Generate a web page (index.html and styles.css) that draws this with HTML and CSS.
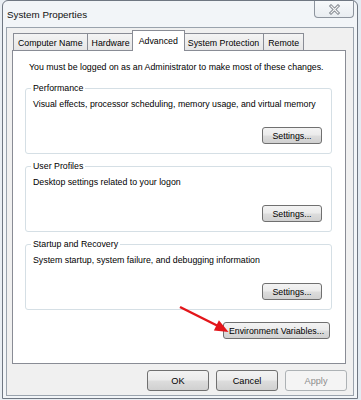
FILE: index.html
```html
<!DOCTYPE html>
<html>
<head>
<meta charset="utf-8">
<link rel="stylesheet" href="styles.css">
</head>
<body>
<div class="window">
  <div class="titlebar">
    <span class="title">System Properties</span>
    <div class="close">
      <svg width="40" height="17" viewBox="0 0 40 17">
        <path d="M16 6 L23 13 M23 6 L16 13" stroke="#7b8089" stroke-width="3" stroke-linecap="square"/>
        <path d="M16 6 L23 13 M23 6 L16 13" stroke="#f6f6f6" stroke-width="1.2" stroke-linecap="square"/>
      </svg>
    </div>
  </div>
  <div class="client">
    <div class="tabs">
      <div class="tab">Computer Name</div>
      <div class="tab">Hardware</div>
      <div class="tab selected">Advanced</div>
      <div class="tab">System Protection</div>
      <div class="tab">Remote</div>
    </div>
    <div class="panel">
      <div class="note">You must be logged on as an Administrator to make most of these changes.</div>
      <fieldset class="group">
        <legend>Performance</legend>
        <div class="desc">Visual effects, processor scheduling, memory usage, and virtual memory</div>
        <div class="row"><button class="btn small">Settings...</button></div>
      </fieldset>
      <fieldset class="group">
        <legend>User Profiles</legend>
        <div class="desc">Desktop settings related to your logon</div>
        <div class="row"><button class="btn small">Settings...</button></div>
      </fieldset>
      <fieldset class="group">
        <legend>Startup and Recovery</legend>
        <div class="desc">System startup, system failure, and debugging information</div>
        <div class="row"><button class="btn small">Settings...</button></div>
      </fieldset>
      <div class="row env-row"><button class="btn env">Environment Variables...</button></div>
    </div>
    <div class="actions">
      <button class="btn big">OK</button>
      <button class="btn big">Cancel</button>
      <button class="btn big disabled">Apply</button>
    </div>
  </div>
</div>
<svg class="arrow" width="361" height="400" viewBox="0 0 361 400">
  <line x1="180" y1="307" x2="218" y2="326" stroke="#e3151a" stroke-width="2.5"/>
  <polygon points="228.5,332 213.9,330.6 218.9,320.3" fill="#e3151a"/>
</svg>
</body>
</html>
```
FILE: styles.css
```css
* { box-sizing: border-box; }
html, body { margin: 0; padding: 0; }
body {
  width: 361px;
  height: 400px;
  overflow: hidden;
  background: linear-gradient(90deg, #e9eef3 0%, #e4ebf2 100%);
  font-family: "Liberation Sans", Arial, sans-serif;
  font-size: 8.8px;
  color: #000;
  position: relative;
}
.window {
  margin-left: 2px;
  width: 356px;
  height: 399px;
  border: 1px solid #6f7782;
  border-radius: 6px 6px 0 0;
  background: #f2f5f8;
  padding: 0 3px 2px 3px;
  display: flex;
  flex-direction: column;
}
.titlebar {
  height: 26px;
  display: flex;
  justify-content: space-between;
  align-items: flex-start;
}
.title {
  font-size: 9.8px;
  line-height: 12px;
  margin-top: 8px;
  margin-left: 1px;
  color: #111;
}
.close {
  width: 40px;
  height: 17px;
  border: 1px solid #8d949e;
  border-top: none;
  border-radius: 0 0 4px 4px;
  background: linear-gradient(#f7f9fb, #e9edf1);
}
.close svg { display: block; margin-top: -1px; }
.client {
  height: 369px;
  border: 1px solid #9aa3ad;
  background: #f0f0f0;
  padding: 2px 7px 4px 5px;
  display: flex;
  flex-direction: column;
}
.tabs {
  height: 20px;
  display: flex;
  align-items: flex-end;
  padding-left: 1px;
}
.tab {
  height: 17px;
  line-height: 12px;
  padding: 3px 4px 1px 4px;
  border: 1px solid #898c95;
  border-bottom: none;
  margin-right: -1px;
  background: linear-gradient(#f4f4f4, #e6e6e6);
  white-space: nowrap;
}
.tab.selected {
  height: 21px;
  padding: 4px 6px 4px 6px;
  margin: 0 -1px -1px -2px;
  background: #fff;
  position: relative;
  z-index: 1;
}
.tab.selected + .tab { margin-left: -1px; }
.panel {
  height: 314px;
  border: 1px solid #898c95;
  background: #fff;
  padding: 10px 13px 0 12px;
  display: flex;
  flex-direction: column;
}
.note {
  line-height: 12px;
  margin-left: 4px;
  white-space: nowrap;
}
.group {
  margin: 6px 0 0 0;
  border: 1px solid #d5dfe5;
  border-radius: 3px;
  padding: 4px 9px 9px 7px;
  min-width: 0;
}
.note + .group { margin-top: 9px; }
.group legend {
  line-height: 12px;
  padding: 0 2px;
  margin-left: -2px;
}
.desc {
  line-height: 12px;
  white-space: nowrap;
}
.row {
  display: flex;
  justify-content: flex-end;
  margin-top: 17px;
}
.btn {
  font-family: "Liberation Sans", Arial, sans-serif;
  font-size: 8.8px;
  color: #000;
  border: 1px solid #707070;
  border-radius: 3px;
  background: linear-gradient(#f3f3f3 0%, #ebebeb 48%, #dddddd 52%, #d0d0d0 100%);
  padding: 0;
  margin: 0;
  line-height: 12px;
}
.btn.small { width: 60px; height: 17px; }
.env-row { margin-top: 12px; margin-right: 2px; }
.btn.env { width: 107px; height: 17px; }
.actions {
  margin-top: 6px;
  margin-right: -1px;
  display: flex;
  justify-content: flex-end;
  gap: 7px;
}
.btn.big { width: 62px; height: 21px; font-size: 9.2px; }
.btn.disabled {
  border-color: #adb2b5;
  background: #f4f4f4;
  color: #8d8d8d;
}
.arrow {
  position: absolute;
  left: 0;
  top: 0;
  pointer-events: none;
}
```
